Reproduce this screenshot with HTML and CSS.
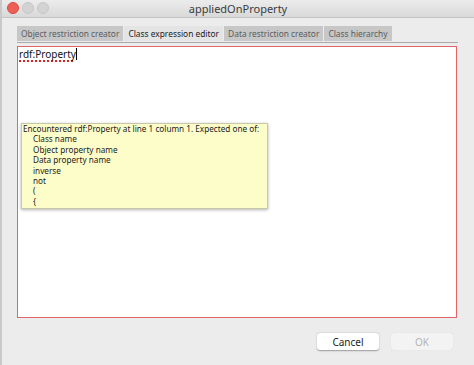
FILE: index.html
```html
<!DOCTYPE html>
<html>
<head>
<meta charset="utf-8">
<link rel="stylesheet" href="styles.css">
</head>
<body>
<div class="window">
  <div class="titlebar">
    <div class="lights">
      <span class="light red"></span>
      <span class="light grey"></span>
      <span class="light grey"></span>
    </div>
    <div class="title">appliedOnProperty</div>
  </div>
  <div class="content">
    <div class="tabs">
      <div class="tab">Object restriction creator</div>
      <div class="tab selected">Class expression editor</div>
      <div class="tab">Data restriction creator</div>
      <div class="tab">Class hierarchy</div>
    </div>
    <div class="tabline"></div>
    <div class="editor">
      <span class="code">rdf:Property</span><span class="caret"></span>
      <div class="tooltip">
        <div>Encountered rdf:Property at line 1 column 1. Expected one of:</div>
        <div class="opt">Class name</div>
        <div class="opt">Object property name</div>
        <div class="opt">Data property name</div>
        <div class="opt">inverse</div>
        <div class="opt">not</div>
        <div class="opt">(</div>
        <div class="opt">{</div>
      </div>
    </div>
    <div class="buttons">
      <button class="btn">Cancel</button>
      <button class="btn disabled">OK</button>
    </div>
  </div>
</div>
</body>
</html>
```
FILE: styles.css
```css
html, body {
  margin: 0;
  padding: 0;
  background: #ececec;
  font-family: "Noto Sans", "DejaVu Sans", sans-serif;
}
.window {
  width: 474px;
  height: 365px;
  display: flex;
  flex-direction: column;
  border-left: 2px solid #c9c9c9;
  box-sizing: border-box;
}
.titlebar {
  height: 17px;
  background: linear-gradient(#ececec, #d9d9d9);
  border-bottom: 1px solid #c4c4c4;
  position: relative;
  display: flex;
  align-items: center;
  justify-content: center;
  flex-shrink: 0;
}
.lights {
  position: absolute;
  left: 5px;
  top: 2px;
  display: flex;
  gap: 3px;
}
.light {
  width: 12px;
  height: 12px;
  border-radius: 50%;
  box-sizing: border-box;
}
.light.red {
  background: #ee5f56;
  border: 1px solid #d94b43;
}
.light.grey {
  background: #d3d3d3;
  border: 1px solid #c6c6c6;
}
.title {
  font-size: 11px;
  color: #3b3b3b;
}
.content {
  padding: 8px 15px 0 15px;
  display: flex;
  flex-direction: column;
  flex: 1;
}
.tabs {
  display: flex;
  height: 15px;
  gap: 1px;
}
.tab {
  background: #c7c7c7;
  color: #5c5c5c;
  font-size: 8.4px;
  padding: 0 4px;
  line-height: 15px;
  white-space: nowrap;
}
.tab.selected {
  background: #e4e4e4;
  color: #222;
}
.tabline {
  height: 1px;
  background: #a9a9a9;
  width: 441px;
  margin-top: 1px;
}
.editor {
  margin-top: 3px;
  width: 440px;
  height: 272px;
  background: #fff;
  border: 1px solid #e0666a;
  box-sizing: border-box;
  position: relative;
  padding: 1px 1px;
  font-size: 10px;
  line-height: 13px;
}
.code {
  color: #111;
  text-decoration: underline dotted #d52626;
  text-decoration-thickness: 1.5px;
  text-underline-offset: 2px;
}
.caret {
  display: inline-block;
  width: 1px;
  height: 12px;
  background: #000;
  vertical-align: -2px;
}
.tooltip {
  position: absolute;
  left: 3px;
  top: 76px;
  width: 247px;
  height: 86px;
  box-sizing: border-box;
  background: #fdfdca;
  border: 1px solid #c8c8a8;
  box-shadow: 0 1px 3px rgba(0,0,0,0.3);
  font-size: 8.2px;
  line-height: 10.4px;
  padding: 0 1px;
  color: #222;
  white-space: nowrap;
}
.opt {
  padding-left: 10px;
}
.buttons {
  display: flex;
  justify-content: flex-end;
  gap: 12px;
  margin-top: 15px;
  padding-right: 6px;
}
.btn {
  width: 62px;
  height: 17px;
  border: none;
  border-radius: 3px;
  background: #fff;
  box-shadow: 0 0.5px 1.5px rgba(0,0,0,0.35);
  font-family: inherit;
  font-size: 10px;
  color: #222;
  padding: 0;
}
.btn.disabled {
  background: #f3f3f3;
  color: #b3b3b3;
  box-shadow: 0 0 1px rgba(0,0,0,0.15);
}
```
